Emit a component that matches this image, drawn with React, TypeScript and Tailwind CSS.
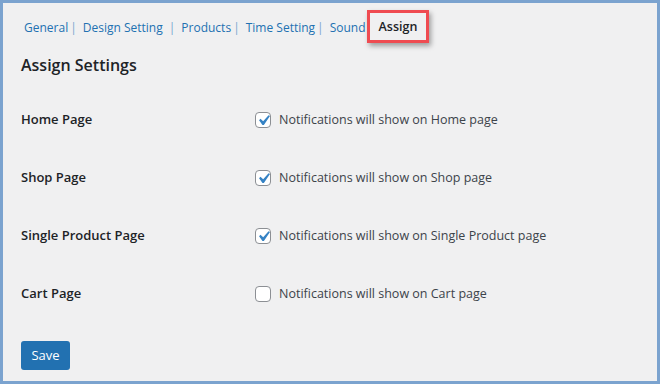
import React from "react";

const rows = [
  { label: "Home Page", text: "Notifications will show on Home page", checked: true },
  { label: "Shop Page", text: "Notifications will show on Shop page", checked: true },
  { label: "Single Product Page", text: "Notifications will show on Single Product page", checked: true },
  { label: "Cart Page", text: "Notifications will show on Cart page", checked: false },
];

function Box({ checked }: { checked: boolean }) {
  return (
    <span className="relative flex h-4 w-4 shrink-0 items-center justify-center rounded-[4px] border border-[#8c8f94] bg-white">
      {checked && (
        <svg className="absolute left-[-3px] top-[-3px]" width="21" height="21" viewBox="0 0 20 20">
          <path d="M14.83 4.89l1.34.94-5.81 8.38H9.02L5.78 9.67l1.34-1.25 2.57 2.4z" fill="#3582c4" />
        </svg>
      )}
    </span>
  );
}

export default function App() {
  return (
    <div
      className="h-[384px] w-[660px] border-[3px] border-[#7ba3cf] bg-[#f0f0f1] text-[13px] text-[#3c434a]"
      style={{ fontFamily: '"Open Sans", "Noto Sans", sans-serif' }}
    >
      <div className="flex h-[40px] items-center pl-[21px] pt-[7px] text-[12px] text-[#2271b1]">
        <div className="flex items-center pt-[3px]">
          <span>General</span>
          <span className="ml-[2px] text-[#7aa5d0]">|</span>
          <span className="ml-[6px]">Design Setting</span>
          <span className="ml-[6px] text-[#7aa5d0]">|</span>
          <span className="ml-[6px]">Products</span>
          <span className="ml-[2px] text-[#7aa5d0]">|</span>
          <span className="ml-[6px]">Time Setting</span>
          <span className="ml-[2px] text-[#7aa5d0]">|</span>
          <span className="ml-[6px]">Sound</span>
        </div>
        <span className="ml-[1px] flex h-[33px] items-center border-[3px] border-[#ef4b51] px-[9px] pt-[2px] text-[12.5px] font-semibold text-[#1d2327] shadow-[2px_3px_5px_rgba(0,0,0,0.35)]">
          Assign
        </span>
      </div>
      <h2 className="ml-[18px] mt-[10px] text-[16px] font-semibold leading-[24px] text-[#1d2327]">
        Assign Settings
      </h2>
      <div className="mt-[14px]">
        {rows.map((r) => (
          <div key={r.label} className="flex h-[58px] items-center pl-[18px]">
            <div className="w-[234px] text-[13px] font-semibold text-[#1d2327]">{r.label}</div>
            <Box checked={r.checked} />
            <span className="ml-[8px] text-[12.5px]">{r.text}</span>
          </div>
        ))}
      </div>
      <button className="ml-[18px] mt-[18px] flex h-[29px] w-[49px] items-center justify-center rounded-[3px] bg-[#2271b1] text-[13px] text-white">
        Save
      </button>
    </div>
  );
}
